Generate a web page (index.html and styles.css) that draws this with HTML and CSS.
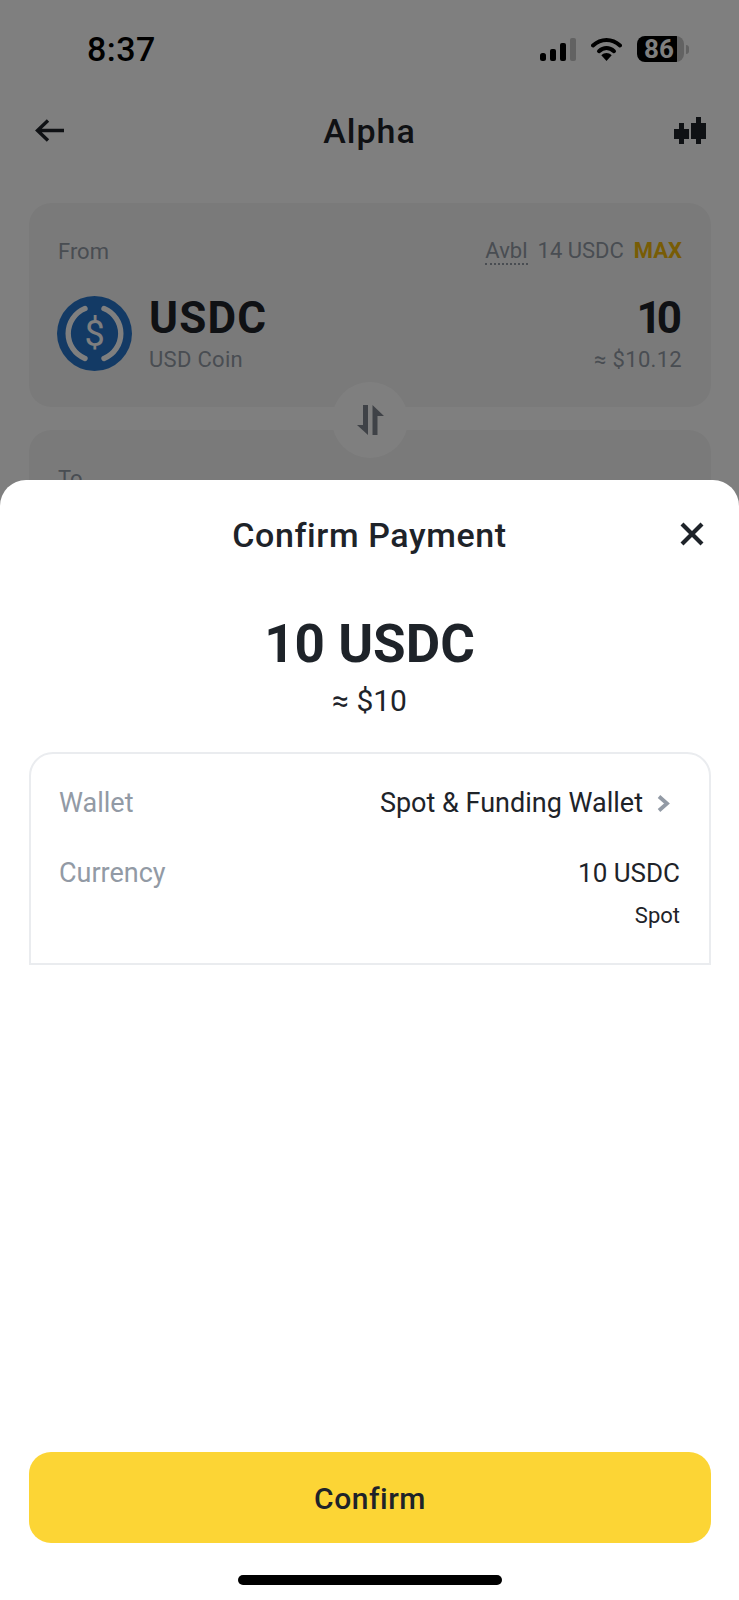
FILE: index.html
```html
<!DOCTYPE html>
<html lang="en">
<head>
     <meta charset="UTF-8">
     <title>Alpha</title>
     <link rel="stylesheet" href="styles.css">
</head>
<body>
     <div class="screen">
          <div class="status">
               <span class="time">8:37</span>
               <div class="status-icons">
                    <svg class="signal" width="36" height="24" viewBox="0 0 36 24">
                         <rect x="0" y="15" width="6" height="8" rx="2.5" fill="#000"/>
                         <rect x="10" y="11" width="6" height="12" rx="2" fill="#000"/>
                         <rect x="20" y="5" width="6" height="18" rx="2" fill="#000"/>
                         <rect x="30" y="0" width="6" height="23" rx="2" fill="#c4c4c4"/>
                    </svg>
                    <svg class="wifi" width="31" height="24" viewBox="0 0 31 24">
                         <path d="M2 8.5C10 1 21 1 29 8.5" fill="none" stroke="#000" stroke-width="4" stroke-linecap="round"/>
                         <path d="M8 14.2C12.5 10 18.5 10 23 14.2" fill="none" stroke="#000" stroke-width="4" stroke-linecap="round"/>
                         <path d="M10.3 18.2C13.5 15.4 17.5 15.4 20.7 18.2L15.5 24Z" fill="#000"/>
                    </svg>
                    <div class="battery">
                         <div class="battery-body">86</div>
                         <div class="battery-nub"></div>
                    </div>
               </div>
          </div>

          <div class="nav">
               <svg width="30" height="24" viewBox="0 0 30 24">
                    <path d="M29 11.5H3M13 1.5L2.5 11.5L13 21.5" fill="none" stroke="#1e2329" stroke-width="3.4"/>
               </svg>
               <span class="nav-title">Alpha</span>
               <svg width="33" height="28" viewBox="0 0 33 28">
                    <path d="M5 6h5v6h5v10h-5v5H5v-5H0V12h5z" fill="#1e2329"/>
                    <path d="M22 0h5v6h5v16h-5v5h-5v-5h-5V6h5z" fill="#1e2329"/>
               </svg>
          </div>

          <div class="cards">
               <div class="card">
                    <div class="card-head">
                         <span>From</span>
                         <div class="avbl">
                              <span class="avbl-label">Avbl</span>
                              <span>14 USDC</span>
                              <span class="max">MAX</span>
                         </div>
                    </div>
                    <div class="asset">
                         <svg class="coin" width="75" height="75" viewBox="0 0 75 75">
                              <circle cx="37.5" cy="37.5" r="37.5" fill="#2775ca"/>
                              <path d="M28 12.5A27 27 0 0 0 28 62.5M47 12.5A27 27 0 0 1 47 62.5" fill="none" stroke="#fff" stroke-width="5.4" stroke-linecap="round"/>
                              <text x="37.5" y="50" text-anchor="middle" class="coin-sign">$</text>
                         </svg>
                         <div class="asset-name">
                              <span class="asset-big">USDC</span>
                              <span class="asset-sub">USD Coin</span>
                         </div>
                         <div class="asset-value">
                              <span class="asset-big asset-num">10</span>
                              <span class="asset-sub">≈ $10.12</span>
                         </div>
                    </div>
               </div>
               <div class="card card-to">
                    <div class="card-head">
                         <span>To</span>
                    </div>
               </div>
               <div class="swap">
                    <svg width="27" height="30" viewBox="0 0 27 30">
                         <path d="M6 0h5v30L0 20h6z" fill="#7f858e"/>
                         <path d="M15.500 0L27 11h-6.500v19h-5z" fill="#7f858e"/>
                    </svg>
               </div>
          </div>
     </div>

     <div class="overlay"></div>

     <div class="sheet">
          <div class="sheet-head">
               <span class="sheet-title">Confirm Payment</span>
               <svg class="close" width="24" height="24" viewBox="0 0 24 24">
                    <path d="M2 2L22 22M22 2L2 22" fill="none" stroke="#1e2329" stroke-width="4.2"/>
               </svg>
          </div>

          <div class="amount">10 USDC</div>
          <div class="amount-usd">≈ $10</div>

          <div class="details">
               <div class="detail-row">
                    <span class="detail-label">Wallet</span>
                    <span class="detail-link">
                         Spot &amp; Funding Wallet
                         <svg width="13" height="17" viewBox="0 0 13 17">
                              <path d="M2 1.500L10 8.500L2 15.500" fill="none" stroke="#929aa5" stroke-width="3.800"/>
                         </svg>
                    </span>
               </div>
               <div class="detail-row detail-row-second">
                    <span class="detail-label">Currency</span>
                    <span class="detail-value">10 USDC</span>
               </div>
               <div class="detail-note">Spot</div>
          </div>

          <button class="confirm">Confirm</button>
          <div class="home-bar"></div>
     </div>
</body>
</html>
```

FILE: styles.css
```css
*{
     box-sizing: border-box;
}
html,body{
     margin: 0;
     padding: 0;
}
body{
     position: relative;
     width: 739px;
     height: 1600px;
     overflow: hidden;
     background: #fff;
     font-family: Roboto, "Liberation Sans", sans-serif;
     color: #1e2329;
}

/* page behind the sheet */
.status{
     display: flex;
     justify-content: space-between;
     align-items: center;
     height: 98px;
     padding: 0 50px 0 87px;
}
.time{
     font-size: 34px;
     font-weight: 500;
     letter-spacing: 0.5px;
     color: #000;
}
.status-icons{
     display: flex;
     align-items: center;
     gap: 15px;
}
.signal{
     margin-top: 1px;
}
.battery{
     display: flex;
     align-items: center;
     gap: 2px;
}
.battery-body{
     width: 47px;
     height: 26px;
     line-height: 26px;
     border-radius: 8px;
     background: linear-gradient(to right, #000 40px, #c4c4c4 40px);
     color: #fff;
     font-size: 26px;
     font-weight: 700;
     padding-left: 7px;
}
.battery-nub{
     width: 3px;
     height: 9px;
     border-radius: 0 3px 3px 0;
     background: #c4c4c4;
}
.nav{
     display: flex;
     justify-content: space-between;
     align-items: center;
     height: 48px;
     margin-top: 9px;
     padding: 0 32px 0 35px;
}
.nav-title{
     font-size: 34px;
     font-weight: 500;
     letter-spacing: 1px;
}
.cards{
     position: relative;
     margin: 48px 28px 0 29px;
}
.card{
     height: 204px;
     padding: 33px 29px 0 29px;
     border-radius: 22px;
     background: #f5f5f5;
}
.card-to{
     margin-top: 23px;
}
.card-head{
     display: flex;
     justify-content: space-between;
     align-items: center;
     height: 30px;
     font-size: 22px;
     color: #929aa5;
}
.avbl{
     display: flex;
     gap: 10px;
}
.avbl-label{
     border-bottom: 2px dotted #929aa5;
}
.max{
     font-weight: 700;
     color: #f0b90b;
}
.asset{
     display: flex;
     margin-top: 30px;
     margin-left: -1px;
}
.coin{
     margin-right: 17px;
}
.coin-sign{
     font-family: Roboto, sans-serif;
     font-size: 36px;
     fill: #fff;
}
.asset-name,.asset-value{
     display: flex;
     flex-direction: column;
     gap: 6px;
}
.asset-value{
     margin-left: auto;
     align-items: flex-end;
}
.asset-big{
     font-size: 44px;
     line-height: 44px;
     font-weight: 700;
     letter-spacing: 1.2px;
}
.asset-num{
     letter-spacing: -5px;
     margin-right: 5px;
}
.asset-sub{
     font-size: 22px;
     line-height: 28px;
     letter-spacing: 0.3px;
     color: #929aa5;
}
.swap{
     position: absolute;
     left: 303px;
     top: 179px;
     width: 76px;
     height: 76px;
     border-radius: 50%;
     background: #fff;
     display: flex;
     justify-content: center;
     align-items: center;
}

/* dim layer */
.overlay{
     position: absolute;
     left: 0;
     top: 0;
     width: 100%;
     height: 100%;
     background: rgba(0,0,0,0.5);
}

/* bottom sheet */
.sheet{
     position: absolute;
     left: 0;
     right: 0;
     top: 480px;
     bottom: 0;
     display: flex;
     flex-direction: column;
     background: #fff;
     border-radius: 26px 26px 0 0;
}
.sheet-head{
     position: relative;
     height: 40px;
     margin-top: 35px;
     line-height: 40px;
     text-align: center;
}
.sheet-title{
     font-size: 34px;
     font-weight: 500;
     letter-spacing: 0.6px;
}
.close{
     position: absolute;
     right: 35px;
     top: 7px;
}
.amount{
     margin-top: 59px;
     line-height: 60px;
     text-align: center;
     font-size: 53px;
     font-weight: 700;
}
.amount-usd{
     margin-top: 9px;
     line-height: 36px;
     text-align: center;
     font-size: 30px;
}
.details{
     height: 213px;
     margin: 33px 28px 0 29px;
     padding: 32px 29px 0 28px;
     border: 2px solid #eaecef;
     border-radius: 24px 24px 0 0;
     font-size: 27px;
     line-height: 34px;
}
.detail-row{
     display: flex;
     justify-content: space-between;
}
.detail-row-second{
     margin-top: 36px;
}
.detail-label{
     color: #929aa5;
}
.detail-link{
     display: flex;
     align-items: center;
     gap: 14px;
     padding-right: 10px;
}
.detail-value{
     font-size: 26px;
}
.detail-note{
     margin-top: 11px;
     line-height: 30px;
     text-align: right;
     font-size: 22px;
}
.confirm{
     display: block;
     height: 91px;
     margin: auto 28px 0 29px;
     padding-top: 2px;
     border: 0;
     border-radius: 22px;
     background: #fcd535;
     color: #1e2329;
     font-family: Roboto, "Liberation Sans", sans-serif;
     font-size: 30px;
     font-weight: 500;
     letter-spacing: 0.5px;
}
.home-bar{
     width: 264px;
     height: 10px;
     margin: 32px auto 15px;
     border-radius: 5px;
     background: #000;
}
```
